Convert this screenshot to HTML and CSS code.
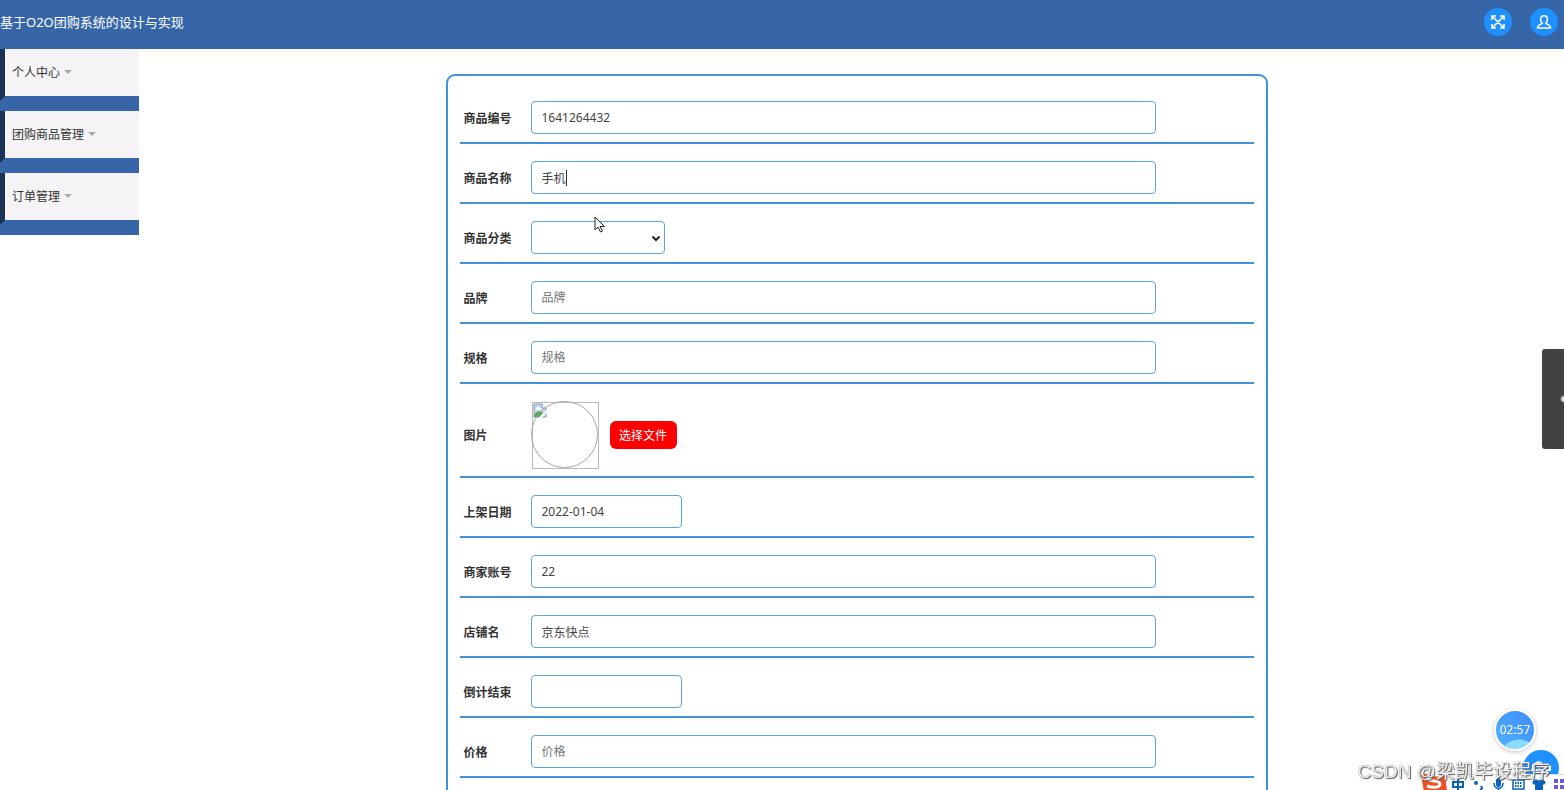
FILE: index.html
```html
<!DOCTYPE html>
<html lang="zh-CN">
<head>
    <meta charset="UTF-8">
    <meta name="viewport" content="width=device-width, initial-scale=1.0">
    <title>基于O2O团购系统的设计与实现</title>
    <link rel="stylesheet" href="styles.css">
</head>
<body>
    <header class="topbar">
        <h1>基于O2O团购系统的设计与实现</h1>
        <div class="topbar-actions">
            <button type="button" class="round-btn" aria-label="全屏">
                <svg width="14" height="14" viewBox="0 0 14 14" fill="none" stroke="currentColor" stroke-width="1.6">
                    <path d="M1 5V1h4M9 1h4v4M13 9v4H9M5 13H1V9M1 1l12 12M13 1L1 13"/>
                </svg>
            </button>
            <button type="button" class="round-btn" aria-label="用户">
                <svg width="16" height="14" viewBox="0 0 16 14" fill="none" stroke="currentColor" stroke-width="1.5">
                    <path d="M6.3 8.2C4.800 7 4.600 5.500 4.600 4.200 4.600 2.200 6 .8 8 .8s3.400 1.400 3.400 3.400c0 1.300-.2 2.800-1.700 4 .1 1 4.800 1.400 4.900 4.800H1.400c.1-3.400 4.800-3.800 4.900-4.800z"/>
                </svg>
            </button>
        </div>
    </header>

    <div class="layout">
        <nav class="sidebar">
            <a href="#">个人中心<span class="caret"></span></a>
            <a href="#">团购商品管理<span class="caret"></span></a>
            <a href="#">订单管理<span class="caret"></span></a>
        </nav>

        <main class="content">
            <form class="card">
                <div class="row">
                    <label for="code">商品编号</label>
                    <input type="text" id="code" value="1641264432">
                </div>
                <div class="row">
                    <label for="name">商品名称</label>
                    <div class="field">
                        <input type="text" id="name" value="手机">
                        <span class="text-cursor"></span>
                    </div>
                </div>
                <div class="row">
                    <label for="category">商品分类</label>
                    <div class="select-wrap">
                        <select id="category"><option></option></select>
                        <svg class="chevron" width="10" height="7" viewBox="0 0 10 7" fill="none" stroke="#222" stroke-width="2">
                            <path d="M1.500 1.500L5 5l3.500-3.500"/>
                        </svg>
                    </div>
                </div>
                <div class="row">
                    <label for="brand">品牌</label>
                    <input type="text" id="brand" placeholder="品牌">
                </div>
                <div class="row">
                    <label for="spec">规格</label>
                    <input type="text" id="spec" placeholder="规格">
                </div>
                <div class="row">
                    <label for="picture">图片</label>
                    <div class="preview">
                        <svg width="68" height="68" viewBox="0 0 68 68" fill="none">
                            <path d="M3 3h8l4 4v9H3z" fill="#c3d7f5" stroke="#8b98ad"/>
                            <path d="M11 3v4h4" fill="#fff" stroke="#8b98ad"/>
                            <path d="M5 8c0-2 3-3 4-1 2 0 2 2 1 2H5z" fill="#fff"/>
                            <path d="M3 16c1-6 6-7 9-4l-4 4z" fill="#4aa83b"/>
                            <path d="M9 17l7-7" stroke="#fff" stroke-width="2"/>
                            <rect x="1.500" y="1.500" width="66" height="66" stroke="#bbb"/>
                            <circle cx="33.500" cy="33.500" r="33" stroke="#aaa"/>
                        </svg>
                    </div>
                    <button type="button" class="file-btn" id="picture">选择文件</button>
                </div>
                <div class="row">
                    <label for="shelfDate">上架日期</label>
                    <input type="text" class="date" id="shelfDate" value="2022-01-04">
                </div>
                <div class="row">
                    <label for="account">商家账号</label>
                    <input type="text" id="account" value="22">
                </div>
                <div class="row">
                    <label for="shop">店铺名</label>
                    <input type="text" id="shop" value="京东快点">
                </div>
                <div class="row">
                    <label for="endTime">倒计结束</label>
                    <input type="text" class="date" id="endTime">
                </div>
                <div class="row">
                    <label for="price">价格</label>
                    <input type="text" id="price" placeholder="价格">
                </div>
            </form>
        </main>
    </div>

    <button type="button" class="side-tab" aria-label="展开"></button>
    <div class="help-ball">
        <svg width="36" height="36" viewBox="0 0 36 36" fill="none" stroke="#fff" stroke-width="2">
            <path d="M10 20v-5l5-3 4 3v3M8 20h12M23 16h4v4h-4zM23 16v8"/>
        </svg>
    </div>
    <div class="timer">02:57</div>

    <div class="ime">
        <svg width="144" height="16" viewBox="0 0 144 16">
            <rect x="18" y="0.500" width="140" height="20" rx="4" fill="#fff" stroke="#ddd"/>
            <path d="M1 1q12-4 24-2l2 19H4z" fill="#f04e23"/>
            <path d="M21 2C13-1 6 2 8 5s12 1 12 5-8 4-13 2" fill="none" stroke="#fff" stroke-width="3"/>
            <path d="M33 8h10v5H33zM38 5v12" fill="none" stroke="#0a62bd" stroke-width="2"/>
            <circle cx="56" cy="9" r="2" fill="#0a62bd"/>
            <path d="M61 12l1 2-2 3" fill="none" stroke="#0a62bd" stroke-width="2"/>
            <rect x="76" y="4" width="5" height="9" rx="2.500" fill="#0a62bd"/>
            <path d="M74 9c0 7 9 7 9 0M78.500 14v3" fill="none" stroke="#0a62bd" stroke-width="1.500"/>
            <rect x="93" y="6" width="11" height="9" fill="none" stroke="#0a62bd" stroke-width="1.500"/>
            <path d="M95 9h7M95 12h7" stroke="#0a62bd" stroke-width="2" stroke-dasharray="1.500 1"/>
            <path d="M116 5q3 3 6 0l4 3-2 3-1-1v7h-8v-7l-1 1-2-3z" fill="#0a62bd"/>
            <path d="M134 5h4v4h-4zM140 5h4v4h-4zM134 11h4v4h-4zM140 11h4v4h-4z" fill="#6a58d8"/>
        </svg>
    </div>
    <div class="watermark">CSDN @梁凯毕设程序</div>

    <svg class="pointer" width="12" height="18" viewBox="0 0 12 18">
        <path d="M1 1v13l3-3 2.500 5 2-1L6 10.500h4.500z" fill="#fff" stroke="#222"/>
    </svg>
</body>
</html>
```
FILE: styles.css
```css
* {
    box-sizing: border-box;
}
body {
    margin: 0;
    height: 100vh;
    overflow: hidden;
    background: #fff;
    color: #333;
    font-family: "Noto Sans", "Noto Sans CJK SC", sans-serif;
    font-size: 12px;
}
button, input, select {
    font: inherit;
}
.topbar {
    display: flex;
    justify-content: space-between;
    height: 49px;
    padding-right: 6px;
    background: #3666a8;
    color: #fff;
}
.topbar h1 {
    margin: 0;
    font-size: 13px;
    font-weight: 400;
    line-height: 45px;
}
.topbar-actions {
    display: flex;
    gap: 18px;
    padding-top: 8px;
}
.round-btn {
    display: flex;
    align-items: center;
    justify-content: center;
    width: 28px;
    height: 28px;
    padding: 0;
    border: none;
    border-radius: 50%;
    background: #1e90ff;
    color: #fff;
}
.layout {
    display: flex;
    align-items: flex-start;
}
.sidebar {
    display: flex;
    flex-direction: column;
    gap: 10px;
    width: 139px;
    padding-bottom: 10px;
    background: #3666a8;
}
.sidebar a {
    display: flex;
    align-items: center;
    height: 52px;
    padding: 0 0 2px 7px;
    border-left: 5px solid #1b3257;
    border-bottom: 5px solid #3666a8;
    background: #f5f3f6;
    color: #333;
    text-decoration: none;
}
.caret {
    margin-left: 4px;
    border: 4px solid transparent;
    border-top-color: #aaa;
    border-bottom: none;
}
.content {
    flex: 1;
    padding: 25px 0 0 10px;
}
.card {
    max-width: 822px;
    margin: 0 auto;
    padding: 8px 12px 20px;
    border: 2px solid #3f92dc;
    border-radius: 9px;
}
.row {
    display: flex;
    align-items: center;
    padding: 17px 98px 8px 4px;
    border-bottom: 2px solid #3f92dc;
}
.row label {
    width: 67px;
    font-weight: 700;
}
.row input, .row select {
    flex: 1;
    height: 33px;
    padding: 0 10px;
    border: 1px solid #5ba4e0;
    border-radius: 4px;
    outline: none;
    background: #fff;
    color: #444;
}
.row input::placeholder {
    color: #777;
}
.row .date {
    flex: none;
    width: 151px;
}
.field {
    display: flex;
    position: relative;
    flex: 1;
}
.text-cursor {
    position: absolute;
    left: 35px;
    top: 9px;
    width: 1px;
    height: 16px;
    background: #333;
}
.select-wrap {
    display: flex;
    position: relative;
    width: 134px;
}
.select-wrap select {
    appearance: none;
}
.chevron {
    position: absolute;
    right: 4px;
    top: 14px;
}
.preview {
    height: 67px;
    margin-right: 11px;
}
.file-btn {
    width: 67px;
    height: 28px;
    padding: 0;
    border: none;
    border-radius: 6px;
    background: #f00;
    color: #fff;
}
.side-tab {
    position: fixed;
    right: 0;
    top: 349px;
    width: 22px;
    height: 100px;
    padding: 0;
    border: none;
    border-radius: 3px 0 0 3px;
    background: radial-gradient(circle at right, #ddd 2px, #424242 4px);
}
.help-ball {
    position: fixed;
    right: 5px;
    bottom: 4px;
    width: 36px;
    height: 36px;
    border-radius: 50%;
    background: #1e90ff;
}
.timer {
    position: fixed;
    right: 28px;
    bottom: 39px;
    width: 42px;
    height: 42px;
    border: 2px solid #fff;
    border-radius: 50%;
    background: radial-gradient(circle at 60% 125%, #8bdcfb 35%, transparent 37%), linear-gradient(225deg, #3d8bff, #4fb2fb);
    box-shadow: 0 1px 4px rgba(0, 0, 0, 0.25);
    color: #fff;
    line-height: 38px;
    text-align: center;
}
.ime {
    position: fixed;
    right: 0;
    bottom: 0;
    height: 16px;
}
.watermark {
    position: fixed;
    right: 14px;
    bottom: 5px;
    color: #eee;
    font-family: "Liberation Sans", "Noto Sans CJK SC", sans-serif;
    font-size: 19px;
    line-height: 26px;
    text-shadow: 1px 1px 1px #555, 0 0 1px #777;
}
.pointer {
    position: fixed;
    left: 594px;
    top: 216px;
}
```
